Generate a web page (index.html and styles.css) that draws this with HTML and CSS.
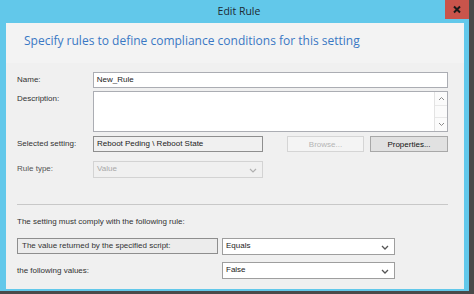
FILE: index.html
```html
<!DOCTYPE html>
<html lang="en">

<head>
    <meta charset="utf-8">
    <title>Edit Rule</title>
    <link rel="stylesheet" href="styles.css">
</head>

<body>
    <div class="window">
        <div class="titlebar">
            <span class="title">Edit Rule</span>
            <svg class="close" width="24" height="19" viewBox="0 0 24 19">
                <rect x="0" y="0" width="24" height="19" fill="#c9544b"/>
                <path d="M9 6.5 L15 12.5 M15 6.5 L9 12.5" stroke="#1a1a1a" stroke-width="2"/>
            </svg>
        </div>
        <div class="content">
            <div class="header">Specify rules to define compliance conditions for this setting</div>

            <div class="form">
                <div class="row">
                    <label>Name:</label>
                    <div class="field text">New_Rule</div>
                </div>
                <div class="row r2">
                    <label>Description:</label>
                    <div class="field area">
                        <div class="scroll">
                            <span class="up"><svg width="7" height="5" viewBox="0 0 7 5"><polyline points="1,4 3.5,1.5 6,4" fill="none" stroke="#8a8a8a" stroke-width="1"/></svg></span>
                            <span class="track"></span>
                            <span class="down"><svg width="7" height="5" viewBox="0 0 7 5"><polyline points="1,1 3.5,3.5 6,1" fill="none" stroke="#8a8a8a" stroke-width="1"/></svg></span>
                        </div>
                    </div>
                </div>
                <div class="row r3">
                    <label>Selected setting:</label>
                    <div class="field readonly">Reboot Peding \ Reboot State</div>
                    <button class="btn disabled">Browse...</button>
                    <button class="btn">Properties...</button>
                </div>
                <div class="row r4">
                    <label class="dim">Rule type:</label>
                    <div class="field select off">
                        <span>Value</span>
                        <svg width="8" height="5" viewBox="0 0 8 5"><polyline points="1,1 4,4 7,1" fill="none" stroke="#b0b0b0" stroke-width="1.2"/></svg>
                    </div>
                </div>
            </div>

            <div class="sep"></div>

            <p class="note">The setting must comply with the following rule:</p>

            <div class="rule">
                <div class="rulebox">The value returned by the specified script:</div>
                <div class="field select pick">
                    <span>Equals</span>
                    <svg width="8" height="5" viewBox="0 0 8 5"><polyline points="1,1 4,4 7,1" fill="none" stroke="#555" stroke-width="1.3"/></svg>
                </div>
            </div>
            <div class="rule r-last">
                <div class="rulelabel">the following values:</div>
                <div class="field select pick">
                    <span>False</span>
                    <svg width="8" height="5" viewBox="0 0 8 5"><polyline points="1,1 4,4 7,1" fill="none" stroke="#555" stroke-width="1.3"/></svg>
                </div>
            </div>
        </div>
    </div>
</body>

</html>
```

FILE: styles.css
```css
* {
    box-sizing: border-box;
}

body {
    margin: 0;
    background: #4a4a4a;
    font-family: "Liberation Sans", Arial, sans-serif;
    font-size: 8px;
    color: #222;
}

.window {
    width: 469px;
    height: 291px;
    background: #62c8ea;
    padding: 0 5px 2px 6px;
    display: flex;
    flex-direction: column;
}

.titlebar {
    height: 23px;
    display: flex;
    align-items: flex-start;
}

.title {
    flex: 1;
    text-align: center;
    padding: 4px 0 0 27px;
    font-family: "Open Sans", sans-serif;
    font-size: 10.5px;
    color: #1d2a33;
}

.close {
    display: block;
    flex: none;
    margin-right: -5px;
}

.content {
    flex: 1;
    background: #f0f0f0;
    padding: 0 16px 0 11px;
}

.header {
    height: 40px;
    margin: 0 -16px 0 -11px;
    padding: 9px 0 0 18px;
    background: #f3f3f3;
    font-family: "Open Sans", sans-serif;
    font-size: 12px;
    color: #3a78c4;
}

.form {
    margin-top: 9px;
}

.row {
    display: flex;
    align-items: flex-start;
}

.row label {
    width: 76px;
    padding-top: 3px;
    color: #333;
}

.row label.dim {
    color: #555;
}

.field {
    background: #fff;
    border: 1px solid #abadb3;
    height: 16px;
    padding: 2px 0 0 3px;
}

.text {
    width: 356px;
}

.r2 {
    margin-top: 3px;
}

.area {
    width: 356px;
    height: 41px;
    padding: 0;
    display: flex;
    justify-content: flex-end;
}

.scroll {
    width: 13px;
    display: flex;
    flex-direction: column;
    background: #fbfbfb;
    border-left: 1px solid #e3e3e3;
}

.scroll .up,
.scroll .down {
    height: 13px;
    display: flex;
    align-items: center;
    justify-content: center;
}

.scroll .track {
    flex: 1;
    border-top: 1px solid #e8e8e8;
    border-bottom: 1px solid #e8e8e8;
}

.r3 {
    margin-top: 4px;
}

.readonly {
    width: 170px;
    background: #f0f0f0;
    border-color: #8e8e8e;
    color: #222;
}

.btn {
    height: 16px;
    font-family: "Liberation Sans", Arial, sans-serif;
    font-size: 8px;
    background: #e1e1e1;
    border: 1px solid #a8a8a8;
    color: #111;
    padding: 0;
    width: 78px;
    margin-left: 6px;
}

.btn.disabled {
    width: 77px;
    margin-left: 24px;
    background: #f4f4f4;
    border-color: #d5d5d5;
    color: #b4b4b4;
}

.r4 {
    margin-top: 9px;
}

.select {
    display: flex;
    justify-content: space-between;
    align-items: flex-start;
}

.select svg {
    margin: 4px 5px 0 0;
}

.off {
    width: 170px;
    height: 17px;
    background: #f0f0f0;
    border-color: #d3d3d3;
    color: #a8a8a8;
}

.sep {
    margin-top: 26px;
    height: 1px;
    background: #c8c8c8;
}

.note {
    margin: 12px 0 0;
    color: #333;
}

.rule {
    display: flex;
    margin-top: 12px;
}

.rulebox {
    width: 201px;
    height: 16px;
    border: 1px solid #8e8e8e;
    background: #ececec;
    padding: 2px 0 0 4px;
    color: #333;
}

.rulelabel {
    width: 201px;
    padding-top: 4px;
    color: #333;
}

.pick {
    margin-left: 4px;
    width: 173px;
    height: 17px;
    border-color: #9e9e9e;
}

.r-last {
    margin-top: 7px;
}
```
